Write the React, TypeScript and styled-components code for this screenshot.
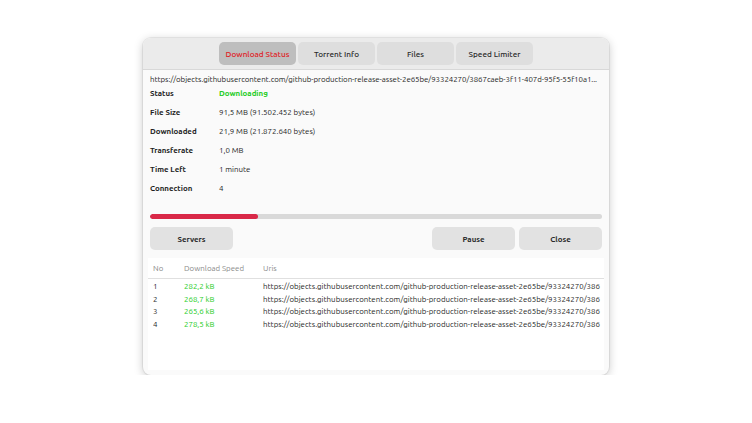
import { Fragment } from 'react';
import styled, { createGlobalStyle } from 'styled-components';

const Global = createGlobalStyle`
  html, body {
    margin: 0;
    background: #ffffff;
  }
  body {
    font-family: Ubuntu, "Noto Sans", "DejaVu Sans", sans-serif;
    font-size: 7.9px;
    color: #1f1f1f;
  }
`;

const Page = styled.div`
  display: flex;
  justify-content: center;
  padding-top: 38px;
`;

const Window = styled.div`
  width: 466px;
  height: 337px;
  display: flex;
  flex-direction: column;
  background: #fafafa;
  border-radius: 8px;
  overflow: hidden;
  box-shadow: 0 0 0 1px rgba(0, 0, 0, 0.06), 0 2px 10px rgba(0, 0, 0, 0.22);
`;

const Header = styled.div`
  height: 31px;
  flex-shrink: 0;
  display: flex;
  align-items: center;
  justify-content: center;
  gap: 2px;
  background: #ebebeb;
  border-bottom: 1px solid #d8d8d8;
`;

const Tab = styled.div<{ $active?: boolean }>`
  width: 77px;
  height: 23px;
  display: flex;
  align-items: center;
  justify-content: center;
  border-radius: 5px;
  font-size: 8.2px;
  font-weight: 500;
  background: ${(p) => (p.$active ? '#bebebe' : '#dedede')};
  color: ${(p) => (p.$active ? '#e01b24' : '#2a2a2a')};
`;

const Body = styled.div`
  flex: 1;
  display: flex;
  flex-direction: column;
  padding: 2px 7px 5px;
  min-height: 0;
`;

const Url = styled.div`
  height: 14px;
  line-height: 14px;
  white-space: nowrap;
  letter-spacing: -0.05px;
`;

const InfoGrid = styled.div`
  display: grid;
  grid-template-columns: 69px 1fr;
  grid-auto-rows: 19px;
  align-items: center;
  margin-top: -3px;
`;

const Label = styled.div`
  font-weight: 700;
  color: #1f1f1f;
`;

const Value = styled.div<{ $status?: boolean }>`
  color: ${(p) => (p.$status ? '#22cc22' : '#1f1f1f')};
  font-weight: ${(p) => (p.$status ? 700 : 400)};
`;

const Progress = styled.div`
  margin-top: 17px;
  height: 5px;
  border-radius: 3px;
  background: #d9d9d9;
  overflow: hidden;
`;

const ProgressFill = styled.div`
  height: 100%;
  border-radius: 3px;
  background: #d92848;
`;

const ButtonRow = styled.div`
  display: flex;
  align-items: center;
  gap: 4px;
  margin-top: 8px;
`;

const Spacer = styled.div`
  flex: 1;
`;

const Button = styled.div`
  width: 83px;
  height: 23px;
  display: flex;
  align-items: center;
  justify-content: center;
  border-radius: 5px;
  background: #e2e2e2;
  font-weight: 700;
  color: #2a2a2a;
`;

const Table = styled.div`
  flex: 1;
  margin: 8px -2px 0;
  background: #ffffff;
  display: flex;
  flex-direction: column;
`;

const Row = styled.div<{ $head?: boolean }>`
  display: grid;
  grid-template-columns: 31px 79px 1fr;
  align-items: center;
  height: ${(p) => (p.$head ? '20px' : '12.6px')};
  padding-left: 5px;
  border-bottom: ${(p) => (p.$head ? '1px solid #e0e0e0' : 'none')};
  margin-bottom: ${(p) => (p.$head ? '1px' : '0')};
  color: ${(p) => (p.$head ? '#8a8a8a' : '#1f1f1f')};
`;

const Cell = styled.div<{ $speed?: boolean }>`
  white-space: nowrap;
  overflow: hidden;
  color: ${(p) => (p.$speed ? '#22cc22' : 'inherit')};
`;

const url =
  'https://objects.githubusercontent.com/github-production-release-asset-2e65be/93324270/3867caeb-3f11-407d-95f5-55f10a1...';
const shortUrl = 'https://objects.githubusercontent.com/github-production-release-asset-2e65be/93324270/386';

const info: [string, string][] = [
  ['File Size', '91,5 MB (91.502.452 bytes)'],
  ['Downloaded', '21,9 MB (21.872.640 bytes)'],
  ['Transferate', '1,0 MB'],
  ['Time Left', '1 minute'],
  ['Connection', '4'],
];

const servers = [
  ['1', '282,2 kB'],
  ['2', '268,7 kB'],
  ['3', '265,6 kB'],
  ['4', '278,5 kB'],
];

export default function App() {
  return (
    <Page>
      <Global />
      <Window>
        <Header>
          <Tab $active>Download Status</Tab>
          <Tab>Torrent Info</Tab>
          <Tab>Files</Tab>
          <Tab>Speed Limiter</Tab>
        </Header>
        <Body>
          <Url>{url}</Url>
          <InfoGrid>
            <Label>Status</Label>
            <Value $status>Downloading</Value>
            {info.map(([k, v]) => (
              <Fragment key={k}>
                <Label>{k}</Label>
                <Value>{v}</Value>
              </Fragment>
            ))}
          </InfoGrid>
          <Progress>
            <ProgressFill style={{ width: '23.9%' }} />
          </Progress>
          <ButtonRow>
            <Button>Servers</Button>
            <Spacer />
            <Button>Pause</Button>
            <Button>Close</Button>
          </ButtonRow>
          <Table>
            <Row $head>
              <Cell>No</Cell>
              <Cell>Download Speed</Cell>
              <Cell>Uris</Cell>
            </Row>
            {servers.map(([n, s]) => (
              <Row key={n}>
                <Cell>{n}</Cell>
                <Cell $speed>{s}</Cell>
                <Cell>{shortUrl}</Cell>
              </Row>
            ))}
          </Table>
        </Body>
      </Window>
    </Page>
  );
}
